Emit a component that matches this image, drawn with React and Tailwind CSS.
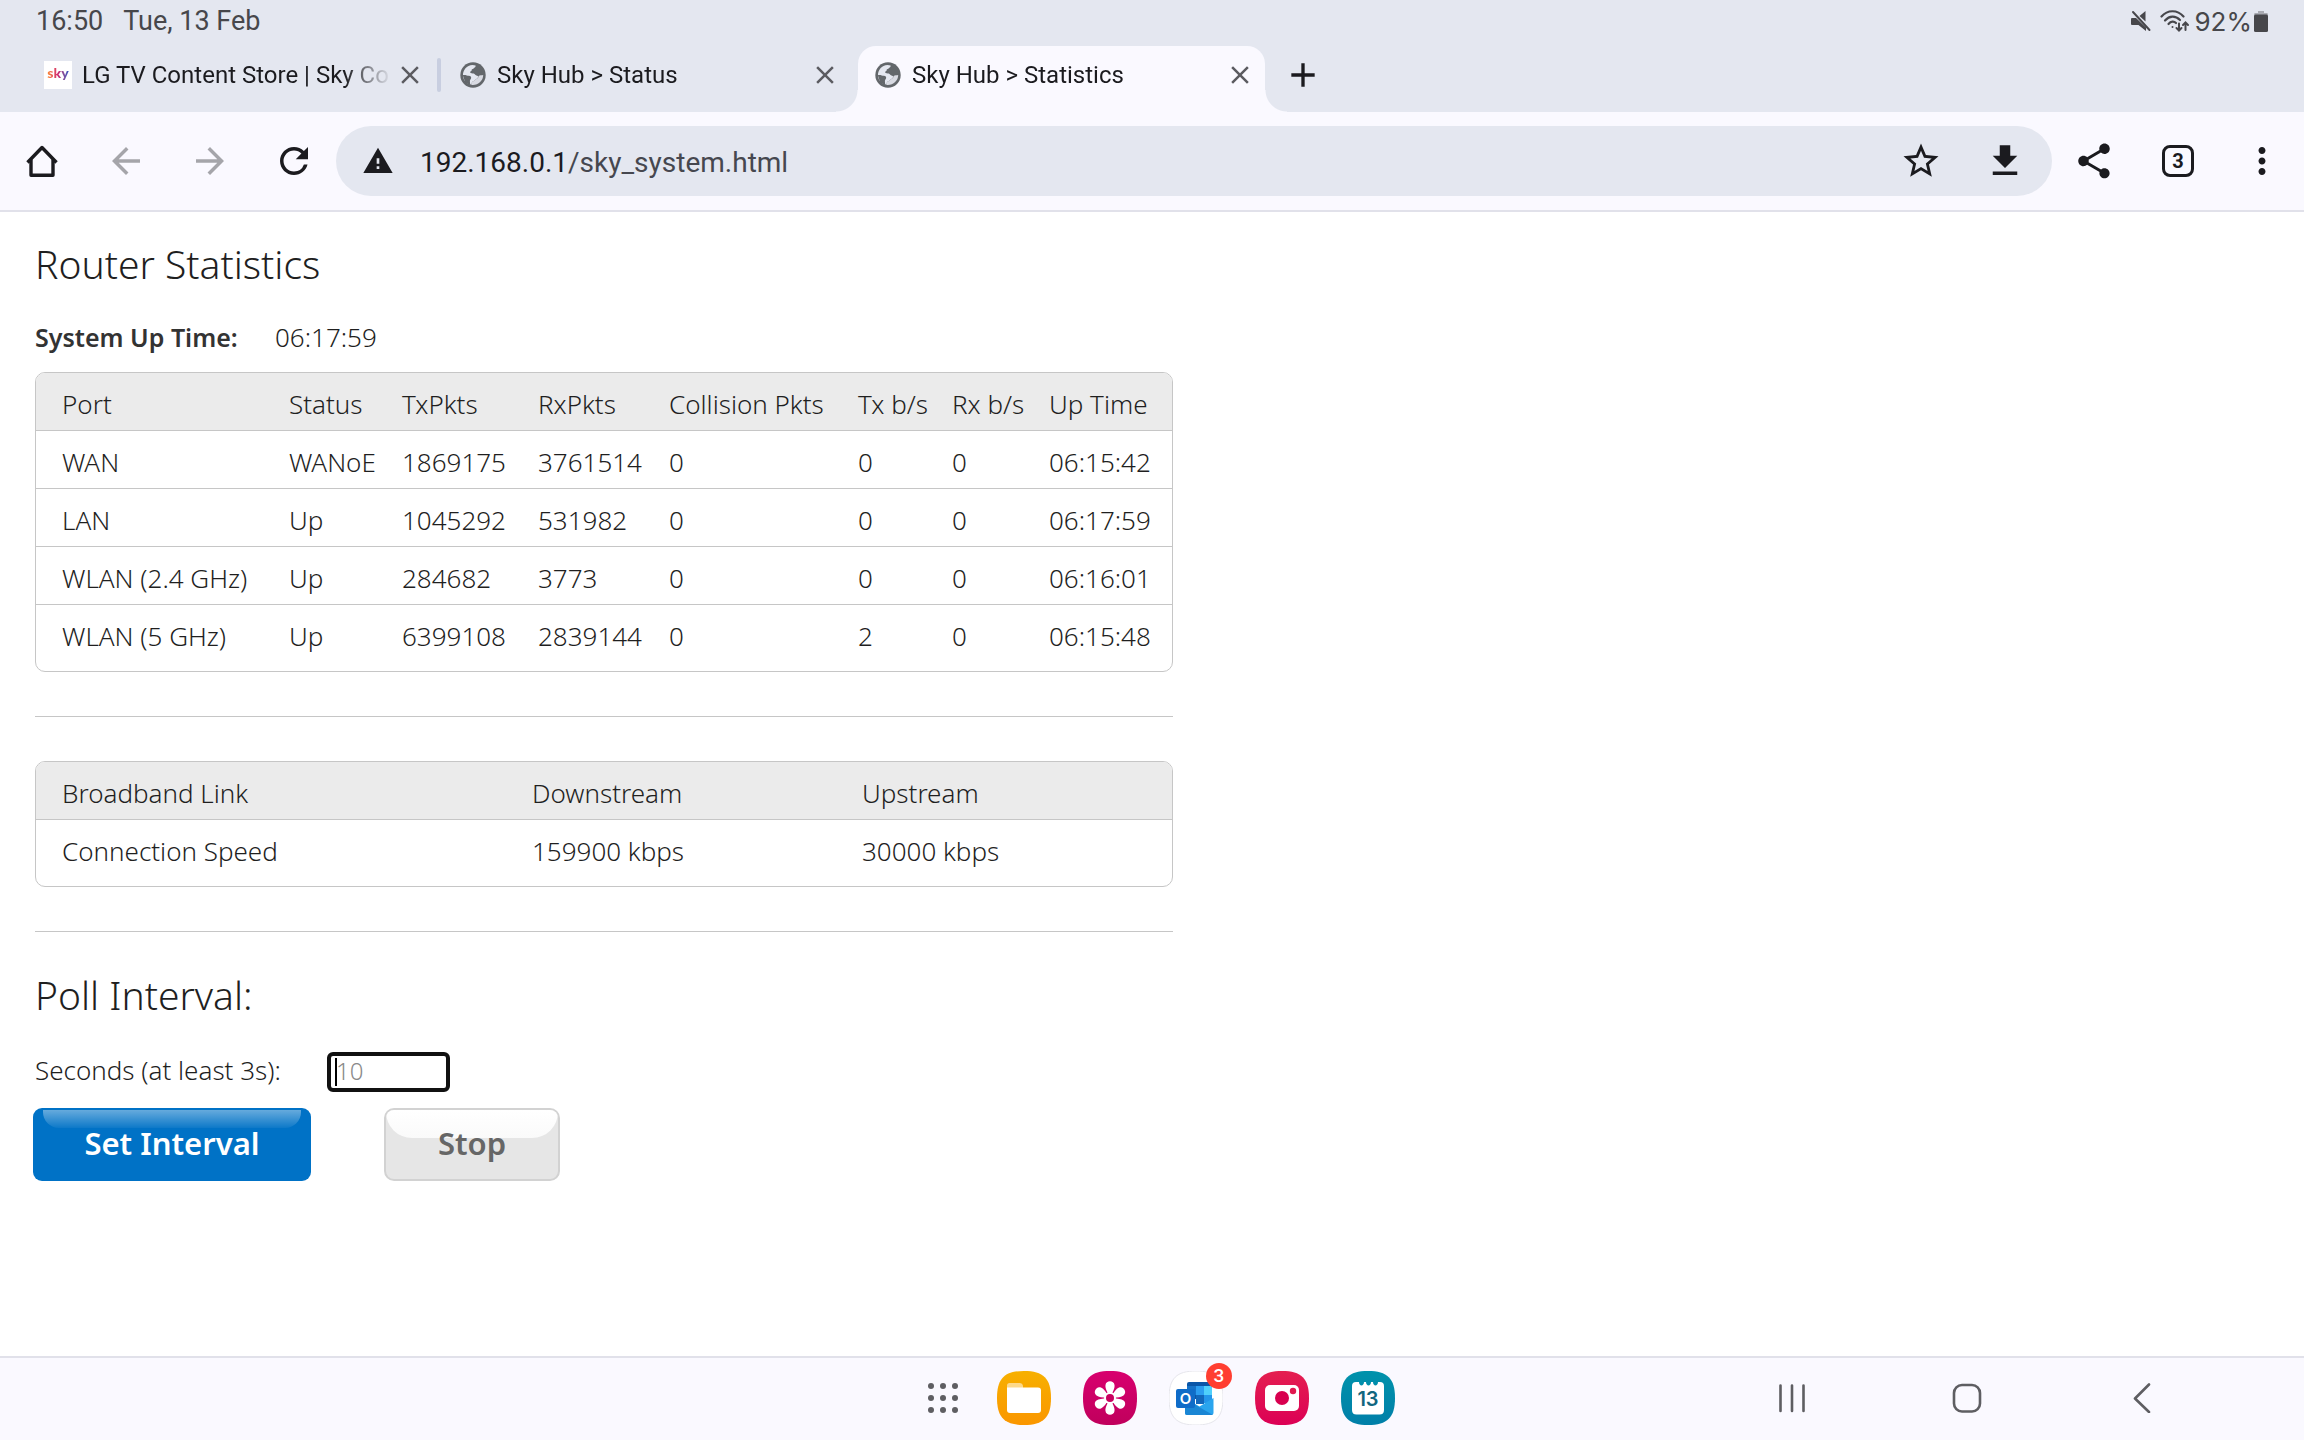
import {
    MdAdd, MdArrowBack, MdArrowForward, MdClose, MdFileDownload, MdMoreVert,
    MdRefresh, MdShare, MdStarBorder, MdWarning,
} from 'react-icons/md';

const ports = [
    { port: 'WAN', status: 'WANoE', tx: '1869175', rx: '3761514', collisions: '0', txRate: '0', rxRate: '0', upTime: '06:15:42' },
    { port: 'LAN', status: 'Up', tx: '1045292', rx: '531982', collisions: '0', txRate: '0', rxRate: '0', upTime: '06:17:59' },
    { port: 'WLAN (2.4 GHz)', status: 'Up', tx: '284682', rx: '3773', collisions: '0', txRate: '0', rxRate: '0', upTime: '06:16:01' },
    { port: 'WLAN (5 GHz)', status: 'Up', tx: '6399108', rx: '2839144', collisions: '0', txRate: '2', rxRate: '0', upTime: '06:15:48' },
];

const portColumns = [
    { label: 'Port', width: 'w-[253px]' },
    { label: 'Status', width: 'w-[113px]' },
    { label: 'TxPkts', width: 'w-[136px]' },
    { label: 'RxPkts', width: 'w-[131px]' },
    { label: 'Collision Pkts', width: 'w-[189px]' },
    { label: 'Tx b/s', width: 'w-[94px]' },
    { label: 'Rx b/s', width: 'w-[97px]' },
    { label: 'Up Time', width: 'w-[123px]' },
];

const linkColumns = [
    { label: 'Broadband Link', width: 'w-[496px]' },
    { label: 'Downstream', width: 'w-[330px]' },
    { label: 'Upstream', width: 'w-[310px]' },
];

const SQUIRCLE = 'M27 0C46.500 0 54 7.500 54 27S46.500 54 27 54 0 46.500 0 27 7.500 0 27 0Z';

const GlobeIcon = () => (
    <svg viewBox="0 0 26 26" className="w-[26px] h-[26px]">
        <circle cx="13" cy="13" r="12.7" fill="#63676b" />
        <path
            d="M3 13.600C2.600 8 6.800 3.400 12.500 3C13.600 3.400 14.600 3.200 15.600 3.600C16 5.200 14.400 5.600 13.600 6.600C12.400 7.200 11.400 7.400 11.600 8.800C10.400 9.400 9.600 10.200 10.600 11C12 11.800 13.600 11 14.800 12.200C15.600 13.400 17.200 13.400 18 14.200C18.600 15.600 16.800 16.400 16 17.200C14.800 17.600 14.600 19 13.200 19.200C11.800 19.600 11.400 21 12 22.800C6.800 22.200 3.200 18.600 3 13.600Z"
            fill="#e4e7f0"
        />
        <path d="M2.800 13.200C5.400 12.600 7 13.800 9 13.800C11.600 14 11.600 16.400 10.400 17.600C9.400 18.800 10.200 20.800 10.200 23L5.200 20.400Z" fill="#63676b" />
        <path d="M12 22.900C11.400 21 11.800 19.600 13.200 19.200C14.600 19 14.800 17.600 16 17.200C17 16.400 18.800 15.600 18.400 14.200C19.800 12.800 21.800 13.600 23.200 13C23.200 18.800 18 23.400 12 22.900Z" fill="#e4e7f0" opacity="0.9" />
    </svg>
);

const SkyIcon = () => (
    <span className="flex w-7 h-7 items-center justify-center bg-white">
        <span className="pb-1 bg-linear-to-r from-[#ff8a1e] via-[#d0206e] to-[#1c4fc4] bg-clip-text text-transparent font-['Lato'] font-black text-[14px] leading-5">
            sky
        </span>
    </span>
);

const Tab = ({ icon, title, active }) => (
    <div className={`relative flex w-[407px] h-full items-center pl-4 pr-[15px] pb-2 ${active ? 'bg-[#faf9ff] rounded-t-[18px]' : ''}`}>
        {active && (
            <>
                <span className="absolute bottom-0 -left-[22px] w-[22px] h-[22px] bg-[radial-gradient(circle_at_0_0,transparent_21px,#faf9ff_22px)]" />
                <span className="absolute bottom-0 -right-[22px] w-[22px] h-[22px] bg-[radial-gradient(circle_at_100%_0,transparent_21px,#faf9ff_22px)]" />
            </>
        )}
        <span className="flex w-7 shrink-0 justify-center">{icon}</span>
        <span className="flex-1 ml-[10px] mr-2 overflow-hidden whitespace-nowrap text-[24px] leading-8 text-[#1b1b1f] [mask-image:linear-gradient(to_right,black_calc(100%-48px),transparent)]">
            {title}
        </span>
        <button aria-label="Close tab" className="flex w-5 h-8 items-center justify-center text-[#5b5b60]">
            <MdClose size={30} className="shrink-0" />
        </button>
    </div>
);

const ToolButton = ({ label, children, className = 'text-[#1b1b1f]' }) => (
    <button aria-label={label} className={`flex w-[84px] h-full shrink-0 items-center justify-center ${className}`}>
        {children}
    </button>
);

const StatusBar = () => (
    <div className="flex h-[46px] items-center justify-between pl-9 pr-9 pb-1 text-[27px] text-[#47474b]">
        <div className="flex gap-5">
            <span>16:50</span>
            <span>Tue, 13 Feb</span>
        </div>
        <div className="flex items-center">
            <svg viewBox="0 0 20 22" className="w-5 h-[22px] mr-[9px]" fill="#47474b">
                <path d="M1 8h4l10 9.500V21L7.500 15H1Q0 15 0 14V9Q0 8 1 8Z" />
                <path d="M14.500 1V11.500L8.500 6Z" />
                <path d="M2 2L18.500 20" stroke="#47474b" strokeWidth="2" strokeLinecap="round" />
            </svg>
            <svg viewBox="0 0 30 24" className="w-[30px] h-6 mr-1" fill="none" stroke="#47474b" strokeWidth="2.2" strokeLinecap="round">
                <path d="M1.500 7.500C7.500 0.500 17.500 0.500 23.500 7.500" />
                <path d="M5 11.500C9.500 6.500 15.500 6.500 20 11" />
                <path d="M8.500 15C11 12 14 12 16 14" />
                <circle cx="12.500" cy="18" r="1" fill="#47474b" stroke="none" />
                <path d="M19 14.500V21M16.500 19L19 21.500L21.500 19M25.500 21V14M23 16L25.500 13.500L28 16" strokeWidth="2" />
            </svg>
            <span className="font-['Inter'] text-[26px]">92%</span>
            <svg viewBox="0 0 14 21" className="w-[14px] h-[21px] ml-0.5">
                <path d="M4 0H10V2H13Q14 2 14 4H0Q0 2 1 2H4Z" fill="#a9abb2" />
                <rect y="3.500" width="14" height="17.500" rx="1.500" fill="#47474b" />
            </svg>
        </div>
    </div>
);

const BrowserChrome = () => (
    <header className="bg-[#e4e7f0] font-['Roboto',sans-serif]">
        <StatusBar />
        <div className="flex h-[66px] gap-2 pl-7">
            <Tab icon={<SkyIcon />} title="LG TV Content Store | Sky Co" />
            <div className="relative">
                <span className="absolute -left-[6px] top-3 w-1 h-[34px] rounded-full bg-[#c8cee0]" />
                <Tab icon={<GlobeIcon />} title="Sky Hub > Status" />
            </div>
            <Tab icon={<GlobeIcon />} title="Sky Hub > Statistics" active />
            <button aria-label="New tab" className="flex w-[60px] items-center justify-center pb-2 text-[#1b1b1f]">
                <MdAdd size={40} />
            </button>
        </div>
        <div className="flex h-[100px] items-center border-b-2 border-[#e1e1ea] bg-[#faf9ff]">
            <ToolButton label="Home">
                <svg viewBox="0 0 32 32" className="w-8 h-8" fill="none" stroke="currentColor" strokeWidth="3.4" strokeLinejoin="round">
                    <path d="M1.500 17.500L16 2.500L30.500 17.500" />
                    <path d="M5 14.500V30.300H27V14.500" />
                </svg>
            </ToolButton>
            <ToolButton label="Back" className="text-[#a5a5aa]"><MdArrowBack size={42} /></ToolButton>
            <ToolButton label="Forward" className="text-[#a5a5aa]"><MdArrowForward size={42} /></ToolButton>
            <ToolButton label="Reload"><MdRefresh size={42} /></ToolButton>
            <div className="flex flex-1 h-[70px] items-center rounded-full bg-[#e4e7f0] pr-[5px]">
                <ToolButton label="Connection is not secure"><MdWarning size={32} /></ToolButton>
                <a href="#url" className="flex-1 pt-1 text-[28px] text-[#46474f]">
                    <span className="text-[#1b1b1f]">192.168.0.1</span>/sky_system.html
                </a>
                <ToolButton label="Bookmark"><MdStarBorder size={42} /></ToolButton>
                <ToolButton label="Download"><MdFileDownload size={42} /></ToolButton>
            </div>
            <ToolButton label="Share"><MdShare size={42} /></ToolButton>
            <ToolButton label="Tabs">
                <span className="flex w-8 h-8 items-center justify-center rounded-lg border-[3px] border-current text-[20px] font-bold">3</span>
            </ToolButton>
            <ToolButton label="Menu"><MdMoreVert size={42} /></ToolButton>
        </div>
    </header>
);

const DataTable = ({ columns, rows }) => (
    <div className="overflow-hidden rounded-[10px] border border-[#c6c6c6]">
        <table className="w-full table-fixed border-separate border-spacing-0 text-left">
            <thead className="bg-[#ebebeb]">
                <tr>
                    {columns.map(c => (
                        <th key={c.label} className={`${c.width} border-b border-[#c6c6c6] pt-[15px] pb-[10px] font-light whitespace-nowrap first:pl-[26px]`}>
                            {c.label}
                        </th>
                    ))}
                </tr>
            </thead>
            <tbody className="[&>tr:last-child>td]:border-b-0 [&>tr:last-child>td]:pb-[19px]">
                {rows.map(row => (
                    <tr key={row[0]}>
                        {row.map((cell, i) => (
                            <td key={i} className="border-b border-[#c6c6c6] pt-[15px] pb-[10px] whitespace-nowrap first:pl-[26px]">{cell}</td>
                        ))}
                    </tr>
                ))}
            </tbody>
        </table>
    </div>
);

const RouterPage = () => (
    <main className="px-[35px] pt-7 pb-10 font-['Noto_Sans',sans-serif] text-[26px] leading-8 font-light text-[#1f1f1f]">
        <div className="max-w-[1138px]">
            <h1 className="text-[39px] leading-[48px]">Router Statistics</h1>
            <p className="flex mt-[33px] mb-[19px]">
                <strong className="w-[240px] text-[25px] font-semibold text-[#333]">System Up Time:</strong>
                <span>06:17:59</span>
            </p>
            <DataTable columns={portColumns} rows={ports.map(p => Object.values(p))} />
            <hr className="mt-11 mb-11 border-[#c6c6c6]" />
            <DataTable columns={linkColumns} rows={[['Connection Speed', '159900 kbps', '30000 kbps']]} />
            <hr className="mt-11 mb-[39px] border-[#c6c6c6]" />
            <h2 className="text-[39px] leading-[48px]">Poll Interval:</h2>
            <form onSubmit={e => e.preventDefault()}>
                <div className="flex items-center mt-[33px]">
                    <label htmlFor="interval" className="w-[292px] pb-1">Seconds (at least 3s):</label>
                    <div className="relative">
                        <input
                            id="interval"
                            type="text"
                            placeholder="10"
                            className="block w-[123px] h-10 rounded-md border-4 border-[#111] bg-white pl-[5px] pb-1 text-2xl font-light outline-none placeholder:text-[#8a8a8a]"
                        />
                        <span className="absolute left-2 top-[6px] w-0.5 h-7 bg-black" />
                    </div>
                </div>
                <div className="flex gap-[73px] mt-4 -ml-0.5 text-[31px] font-semibold">
                    <button className="relative w-[278px] h-[73px] rounded-[9px] bg-[#0072c6] pb-1 text-white">
                        <span className="absolute inset-x-[10px] top-0.5 h-[18px] rounded-b-2xl bg-linear-to-b from-white/40 to-white/5" />
                        <span className="relative">Set Interval</span>
                    </button>
                    <button type="button" className="relative w-[176px] h-[73px] overflow-hidden rounded-[10px] border-2 border-[#d2d2d2] bg-[#e6e6e6] pb-1 text-[#666]">
                        <span className="absolute inset-x-0 top-0 h-7 rounded-b-[26px] bg-linear-to-b from-white to-[#fafafa]" />
                        <span className="relative">Stop</span>
                    </button>
                </div>
            </form>
        </div>
    </main>
);

const DockButton = ({ label, width = 'w-[86px]', children }) => (
    <button aria-label={label} className={`relative flex ${width} items-center justify-center pb-0.5`}>{children}</button>
);

const AppIcon = ({ id, from, to, children }) => (
    <svg viewBox="0 0 54 54" className="w-[54px] h-[54px]">
        <defs>
            <linearGradient id={id} x1="0" y1="0" x2="0" y2="1">
                <stop offset="0" stopColor={from} />
                <stop offset="1" stopColor={to} />
            </linearGradient>
        </defs>
        <path d={SQUIRCLE} fill={`url(#${id})`} />
        {children}
    </svg>
);

const Dock = () => (
    <div className="flex h-full pl-3">
        <DockButton label="All apps" width="w-[76px]">
            <svg viewBox="0 0 30 30" className="w-[30px] h-[30px]" fill="#5e5e62">
                {[3, 15, 27].map(y => [3, 15, 27].map(x => <circle key={`${x}-${y}`} cx={x} cy={y} r="3" />))}
            </svg>
        </DockButton>
        <DockButton label="My Files">
            <AppIcon id="files" from="#f7b000" to="#fa9600">
                <path d="M10 17V14.500Q10 12 12.500 12H23Q25.500 12 26 14.500V17Z" fill="#fdd98a" />
                <path d="M10 16.500H41Q44 16.500 44 19.500V39Q44 42 41 42H13Q10 42 10 39Z" fill="#fff" />
            </AppIcon>
        </DockButton>
        <DockButton label="Gallery">
            <AppIcon id="gallery" from="#d8006f" to="#c0005c">
                {[0, 60, 120, 180, 240, 300].map(a => (
                    <path key={a} d="M27 26C24 21 22 17 22.500 14C23 9 31 9 31.500 14C32 17 30 21 27 26Z" fill="#fff" transform={`rotate(${a} 27 27)`} />
                ))}
                <circle cx="27" cy="27" r="6" fill="#fff" />
                <circle cx="27" cy="27" r="4" fill="#c9005f" />
            </AppIcon>
        </DockButton>
        <DockButton label="Outlook">
            <svg viewBox="0 0 54 54" className="w-[54px] h-[54px]">
                <path d={SQUIRCLE} fill="#fff" stroke="#e6e6ec" strokeWidth="1" />
                <path d="M18 13Q18 11 20 11H41Q43 11 43 13V28H18Z" fill="#0a56a8" />
                <path d="M18 15H27V24H18Z" fill="#1572c8" />
                <path d="M27 15H35V24H27Z" fill="#2b9df0" />
                <path d="M35 15H43V24H35Z" fill="#4fd0fb" />
                <path d="M27 24H35V33H27Z" fill="#1267bb" />
                <path d="M35 24H43V32H35Z" fill="#2396ea" />
                <path d="M16 27L30.500 35.500L44.500 27V42Q44.500 44 42.500 44H18Q16 44 16 42Z" fill="#2aa5ee" />
                <path d="M16 28L44 44H18Q16 44 16 42Z" fill="#1a86d4" />
                <rect x="7" y="18" width="19" height="19" rx="2" fill="#0f6cc8" />
                <text x="16.500" y="33" textAnchor="middle" fontSize="15" fontWeight="600" fill="#fff" className="font-['Inter']">O</text>
            </svg>
            <span className="absolute top-[5px] right-[7px] flex w-[26px] h-[26px] items-center justify-center rounded-full bg-[#ff3e31] text-[19px] leading-5 font-medium text-white">3</span>
        </DockButton>
        <DockButton label="Camera">
            <AppIcon id="camera" from="#e41f50" to="#dc0055">
                <rect x="10" y="14" width="34" height="26" rx="5" fill="#fff" />
                <circle cx="27" cy="27" r="7" fill="#d8004f" />
                <circle cx="38" cy="20" r="3.200" fill="#e0184f" />
            </AppIcon>
        </DockButton>
        <DockButton label="Calendar">
            <AppIcon id="calendar" from="#0092ab" to="#007fa8">
                <path d="M15 11H18C18 15.500 23 15.500 23 11H25C25 15.500 30 15.500 30 11H32C32 15.500 37 15.500 37 11H39Q43 11 43 15V39Q43 43.500 38.500 43.500H15.500Q11 43.500 11 39V15Q11 11 15 11Z" fill="#fff" />
                <text x="27" y="35" textAnchor="middle" fontSize="20" fontWeight="600" fill="#12677f" className="font-['Inter']">13</text>
            </AppIcon>
        </DockButton>
    </div>
);

const NavButton = ({ label, children }) => (
    <button aria-label={label} className="flex w-[175px] items-center justify-center pb-0.5">
        <svg viewBox="0 0 30 30" className="w-[30px] h-[30px]" fill="none" stroke="#5e5e62" strokeWidth="2.600" strokeLinecap="round" strokeLinejoin="round">
            {children}
        </svg>
    </button>
);

const SystemNav = () => (
    <nav className="mt-auto grid h-[84px] grid-cols-[1fr_auto_1fr] border-t-2 border-[#e1e1ea] bg-[#faf9ff] font-['Roboto',sans-serif]">
        <div className="col-start-2"><Dock /></div>
        <div className="flex justify-end pr-[75px]">
            <NavButton label="Recents"><path d="M3.500 2.500V28M15 2.500V28M26.500 2.500V28" /></NavButton>
            <NavButton label="Home"><rect x="2" y="2" width="26" height="26.500" rx="8" /></NavButton>
            <NavButton label="Back"><path d="M22 1.500L8 15.500L22 29" /></NavButton>
        </div>
    </nav>
);

export default function App() {
    return (
        <div className="flex min-h-screen flex-col bg-white">
            <BrowserChrome />
            <RouterPage />
            <SystemNav />
        </div>
    );
}
